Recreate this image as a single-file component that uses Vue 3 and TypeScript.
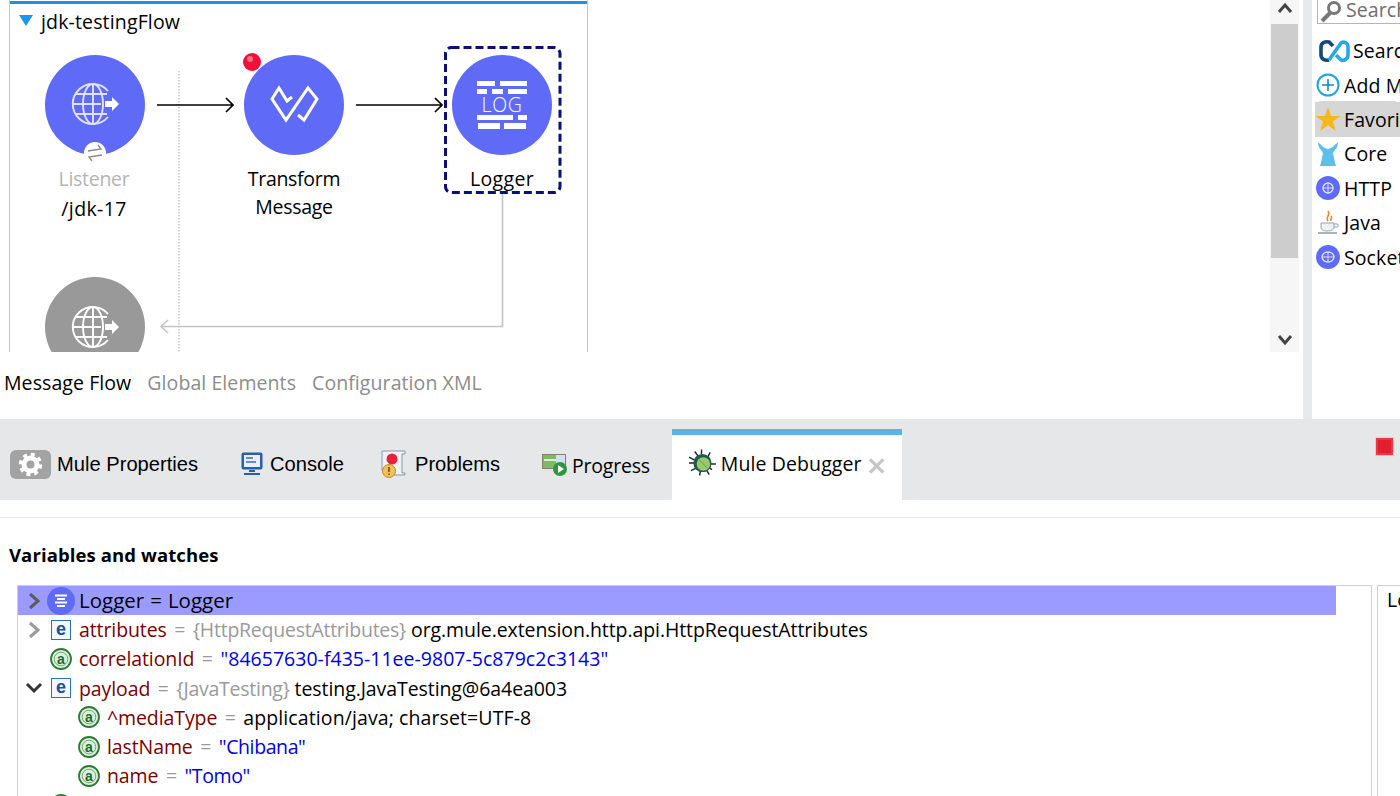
<script setup lang="ts">
interface Row {
  id: number
  depth: number
  chevron: '' | 'closed' | 'open' | 'closedDark'
  icon: 'bar' | 'e' | 'a'
  name: string
  type?: string
  value: string
  kind: 'val' | 'str' | 'wide' | 'strn'
  selected?: boolean
}

const rows: Row[] = [
  { id: 1, depth: 0, chevron: 'closedDark', icon: 'bar', name: 'Logger', value: 'Logger', kind: 'val', selected: true },
  { id: 2, depth: 0, chevron: 'closed', icon: 'e', name: 'attributes', type: '{HttpRequestAttributes} ', value: 'org.mule.extension.http.api.HttpRequestAttributes', kind: 'val' },
  { id: 3, depth: 0, chevron: '', icon: 'a', name: 'correlationId', value: '"84657630-f435-11ee-9807-5c879c2c3143"', kind: 'str' },
  { id: 4, depth: 0, chevron: 'open', icon: 'e', name: 'payload', type: '{JavaTesting} ', value: 'testing.JavaTesting@6a4ea003', kind: 'val' },
  { id: 5, depth: 1, chevron: '', icon: 'a', name: '^mediaType', value: 'application/java; charset=UTF-8', kind: 'wide' },
  { id: 6, depth: 1, chevron: '', icon: 'a', name: 'lastName', value: '"Chibana"', kind: 'strn' },
  { id: 7, depth: 1, chevron: '', icon: 'a', name: 'name', value: '"Tomo"', kind: 'strn' },
  { id: 8, depth: 0, chevron: '', icon: 'a', name: '', value: '', kind: 'val' }
]

const logBars = [
  [477, 81, 18, 5], [500, 81, 27, 5],
  [477, 89, 10, 5], [492, 89, 11, 5], [508, 89, 19, 5],
  [477, 115, 36, 5], [518, 115, 9, 5],
  [478, 123, 22, 6], [504, 123, 22, 6]
]
</script>

<template>
  <div class="page">
    <section class="top">
      <div class="editor">
        <div class="flowbox">
          <svg class="diagram" viewBox="9 0 579 352" width="579" height="352">
            <defs>
              <g id="globe" fill="none" stroke-width="1.9">
                <path d="M15 -13A20 20 0 1 0 15 13" />
                <ellipse cx="0" cy="0" rx="10" ry="20" />
                <path d="M0 -20V20M-18 -10H14M-18 10H14M-20 0H8" />
                <path d="M12 -3H19V-7L26 0L19 7V3H12Z" fill="currentColor" stroke="none" />
              </g>
            </defs>
            <line x1="179" y1="71" x2="179" y2="352" stroke="#a8a8a8" stroke-dasharray="1.5 1.5" />
            <circle cx="95" cy="105" r="50" fill="#5f6bf7" />
            <use href="#globe" x="93" y="104" stroke="#dfe2ff" color="#ffffff" />
            <circle cx="95" cy="153" r="11" fill="#ffffff" />
            <path d="M88 151L101 149L98 145M102 155L89 157L92 161" fill="none" stroke="#8a8a8a" stroke-width="1.3" />

            <circle cx="294" cy="105" r="50" fill="#5f6bf7" />
            <path d="M292 97L287 101L279 88L272 99L286 120L308 88L317 99L304 120L298 115" fill="none" stroke="#ffffff" stroke-width="3" />
            <circle cx="252" cy="62" r="9" fill="#f0103c" />
            <circle cx="250" cy="59" r="3" fill="#ff6f88" />

            <circle cx="502" cy="105" r="50" fill="#5f6bf7" />
            <rect v-for="(b, i) in logBars" :key="i" :x="b[0]" :y="b[1]" :width="b[2]" :height="b[3]" fill="#ffffff" />
            <text x="502" y="112" text-anchor="middle" class="logword">LOG</text>
            <rect x="445.5" y="47.5" width="114.5" height="145" rx="6" fill="none" stroke="#0b0f78" stroke-width="3" stroke-dasharray="8 4" />

            <path d="M157 105H233M226 98L233 105L226 112" fill="none" stroke="#000" stroke-width="1.7" />
            <path d="M356 105H442M435 98L442 105L435 112" fill="none" stroke="#000" stroke-width="1.7" />

            <circle cx="95" cy="327" r="50" fill="#999999" />
            <use href="#globe" x="93" y="327" stroke="#ffffff" color="#ffffff" />
            <path d="M502.5 194V326.5H161M168 320L161 326.5L168 333" fill="none" stroke="#c4c4c4" stroke-width="1.6" />
          </svg>
          <div class="flowtitle"><span class="tri"></span>jdk-testingFlow</div>
          <span class="nodelabel faint n1">Listener</span>
          <span class="nodelabel wide n2">/jdk-17</span>
          <span class="nodelabel n3">Transform<br />Message</span>
          <span class="nodelabel wide n4">Logger</span>
        </div>
        <nav class="viewtabs">
          <span class="on">Message Flow</span>
          <span>Global Elements</span>
          <span>Configuration XML</span>
        </nav>
      </div>

      <div class="scroll">
        <svg class="chev" width="16" height="24" viewBox="0 0 16 24"><path d="M2 12L8 5L14 12" fill="none" stroke="#444" stroke-width="3" /></svg>
        <div class="thumb"></div>
        <div class="scrollrest"></div>
        <svg class="chev" width="16" height="24" viewBox="0 0 16 24"><path d="M2 8L8 15L14 8" fill="none" stroke="#444" stroke-width="3" /></svg>
      </div>
      <div class="sash"></div>

      <aside class="palette">
        <div class="searchbox">
          <svg width="26" height="24" viewBox="0 0 26 24"><circle cx="16" cy="8" r="5.5" fill="none" stroke="#777" stroke-width="3" /><path d="M12 13L4 21" stroke="#777" stroke-width="4" /></svg>
          <span>Search</span>
        </div>
        <div class="palrow first">
          <svg width="31" height="26" viewBox="0 0 31 26"><path d="M14 8L10 4C6 3 2 5 2 9V17C2 21 6 23 10 22" fill="none" stroke="#164a6e" stroke-width="3.6" /><path d="M10 22L22 5C25 3 29 5 29 9V17C29 21 25 23 22 22L17 17" fill="none" stroke="#27a8e0" stroke-width="3.6" /></svg>
          <span>Search in Exchange</span>
        </div>
        <div class="palrow">
          <svg width="24" height="24" viewBox="0 0 24 24"><circle cx="12" cy="12" r="10.5" fill="none" stroke="#1fa3df" stroke-width="2" /><path d="M12 6V18M6 12H18" stroke="#1786c4" stroke-width="1.6" /></svg>
          <span>Add Modules</span>
        </div>
        <div class="palrow fav">
          <svg width="26" height="26" viewBox="0 0 26 26"><path d="M13 1L16.2 10H25.5L18 15.5L20.8 25L13 19.2L5.2 25L8 15.5L.5 10H9.8Z" fill="#f4b81e" /></svg>
          <span>Favorites</span>
        </div>
        <div class="palrow">
          <svg width="24" height="26" viewBox="0 0 24 26"><path d="M2 1C2 8 6 9 7 12C6 17 5 22 4 25H20C19 22 18 17 17 12C18 9 22 8 22 1C19 4 15 8 12 8C9 8 5 4 2 1Z" fill="#5cc0ec" /></svg>
          <span>Core</span>
        </div>
        <div class="palrow">
          <svg width="24" height="24" viewBox="0 0 24 24"><circle cx="12" cy="12" r="12" fill="#5f6bf7" /><circle cx="12" cy="12" r="5" fill="none" stroke="#dfe2ff" stroke-width="1.4" /><path d="M12 7V17M7 12H17" stroke="#dfe2ff" /></svg>
          <span>HTTP</span>
        </div>
        <div class="palrow">
          <svg width="24" height="26" viewBox="0 0 24 26"><path d="M12 1C15 5 9 7 12 11M15 6C17 8 14 9 15 11" fill="none" stroke="#e8872a" stroke-width="1.6" /><path d="M5 13H18V17C18 20 15 21 11 21C8 21 5 20 5 17Z" fill="#eef1f4" stroke="#9aa4ad" /><path d="M18 14H22V17H18" fill="none" stroke="#9aa4ad" /><path d="M2 23H21" stroke="#8b96a0" stroke-width="1.5" /></svg>
          <span>Java</span>
        </div>
        <div class="palrow">
          <svg width="24" height="24" viewBox="0 0 24 24"><circle cx="12" cy="12" r="12" fill="#5f6bf7" /><ellipse cx="12" cy="12" rx="6" ry="5" fill="none" stroke="#dfe2ff" stroke-width="1.4" /><path d="M12 7V17M6 12H18" stroke="#dfe2ff" /></svg>
          <span>Sockets</span>
        </div>
      </aside>
    </section>

    <section class="tabbar">
      <div class="tab t1">
        <svg width="41" height="29" viewBox="0 0 41 29"><rect width="41" height="29" rx="6" fill="#a3a3a3" /><circle cx="20.5" cy="14.5" r="6.5" fill="none" stroke="#fff" stroke-width="5" /><circle cx="20.5" cy="14.5" r="10" fill="none" stroke="#fff" stroke-width="3.5" stroke-dasharray="4 3.85" /></svg>
        <span class="arial">Mule Properties</span>
      </div>
      <div class="tab t2">
        <svg width="22" height="24" viewBox="0 0 22 24"><rect x=".5" y=".5" width="21" height="17" rx="2" fill="#2b5ea8" /><rect x="3" y="3" width="16" height="12" fill="#e9eff7" /><path d="M5 6H12M5 10H15" stroke="#3b6fb5" stroke-width="1.5" /><path d="M8 18H14V20H8ZM3 21H19V23H3Z" fill="#2b5ea8" /></svg>
        <span class="arial">Console</span>
      </div>
      <div class="tab t3">
        <svg width="25" height="28" viewBox="0 0 25 28"><path d="M1 1H24V4H21V23H24V25H12V20H1Z" fill="#eef2f7" stroke="#8a97a8" /><circle cx="11" cy="9" r="5.5" fill="#e8203a" /><circle cx="8" cy="21" r="6.5" fill="#f0c05a" stroke="#c88a1c" /><path d="M8 17V22M8 23.5V25" stroke="#7a4a00" stroke-width="1.6" /></svg>
        <span class="arial">Problems</span>
      </div>
      <div class="tab t4">
        <svg width="25" height="22" viewBox="0 0 25 22"><rect x=".5" y=".5" width="23" height="14" fill="#cfe2ee" stroke="#8b7d6b" /><rect x="1" y="1" width="13" height="13" fill="#7dbb62" /><path d="M2 6H14" stroke="#fff" stroke-width="1.5" /><circle cx="18" cy="15" r="7" fill="#2d9640" /><path d="M16 11L22 15L16 19Z" fill="#fff" /></svg>
        <span>Progress</span>
      </div>
      <div class="tab active">
        <svg width="28" height="28" viewBox="0 0 28 28"><path d="M6 2L11 9M13 0V5M22 3L19 9M0 8L6 11M0 14H6M23 15H28M2 22L8 19M21 26L18 21M11 27L12 22M24 21L20 18" stroke="#1d2a2a" stroke-width="1.5" /><circle cx="14" cy="14" r="9.5" fill="#1c5c52" /><circle cx="15" cy="15" r="7" fill="#9ac86e" /><path d="M11 11L19 19" stroke="#5f9e55" /></svg>
        <span>Mule Debugger</span>
        <svg class="close" width="18" height="18" viewBox="0 0 18 18"><path d="M2 2L16 16M16 2L2 16" stroke="#c6c6c6" stroke-width="3.4" /></svg>
      </div>
      <div class="stop"><div class="stopin"></div></div>
    </section>

    <div class="strip"></div>

    <section class="debugger">
      <h2>Variables and watches</h2>
      <div class="panes">
        <div class="tree">
          <div v-for="r in rows" :key="r.id" class="row" :class="{ sel: r.selected, deep: r.depth > 0 }">
            <span class="chevcell">
              <svg v-if="r.chevron === 'closed' || r.chevron === 'closedDark'" width="14" height="18" viewBox="0 0 14 18"><path d="M3 2L11 9L3 16" fill="none" :stroke="r.chevron === 'closed' ? '#9a9a9a' : '#5c5c5c'" stroke-width="3" /></svg>
              <svg v-else-if="r.chevron === 'open'" width="18" height="14" viewBox="0 0 18 14"><path d="M2 3L9 10L16 3" fill="none" stroke="#333" stroke-width="3" /></svg>
            </span>
            <svg v-if="r.icon === 'bar'" class="ico" width="28" height="28" viewBox="0 0 28 28"><circle cx="14" cy="14" r="14" fill="#5f6bf7" /><path d="M8 8.5H20M10 12H18M8 15.5H20M10 19H18" stroke="#fff" stroke-width="1.8" /></svg>
            <svg v-else-if="r.icon === 'e'" class="ico" width="28" height="22" viewBox="0 0 28 22"><rect x="4.5" y="1.5" width="19" height="19" fill="#f4f8fc" stroke="#2c72b8" /><text x="14" y="16" text-anchor="middle" class="glyph e">e</text></svg>
            <svg v-else class="ico" width="28" height="22" viewBox="0 0 28 22"><circle cx="14" cy="11" r="10" fill="#dcefdc" stroke="#2c7a34" stroke-width="1.8" /><circle cx="14" cy="11" r="6.8" fill="none" stroke="#2c7a34" stroke-width=".6" /><text x="14" y="16" text-anchor="middle" class="glyph a">a</text></svg>
            <span class="text">
              <span class="nm">{{ r.name }}</span>
              <span v-if="r.name" class="eq">=</span>
              <span v-if="r.type" class="ty">{{ r.type }}</span>
              <span :class="r.kind">{{ r.value }}</span>
            </span>
          </div>
        </div>
        <div class="detail">Logger</div>
      </div>
    </section>
  </div>
</template>

<style>
html,
body {
  margin: 0;
  background: #fff;
  overflow: hidden;
}
</style>

<style scoped>
.page {
  width: 1400px;
  height: 796px;
  overflow: hidden;
  background: #fff;
  font-family: "Open Sans", "Liberation Sans", sans-serif;
  font-size: 19.5px;
  letter-spacing: 0.1px;
  color: #000;
  display: flex;
  flex-direction: column;
}
.top {
  height: 419px;
  flex: none;
  display: flex;
}
.editor {
  width: 1270px;
  flex: none;
}
.flowbox {
  position: relative;
  box-sizing: border-box;
  width: 579px;
  height: 352px;
  margin-left: 9px;
  border-left: 1px solid #c6c6c6;
  border-right: 1px solid #c6c6c6;
  overflow: hidden;
}
.flowbox::before {
  content: "";
  position: absolute;
  left: -1px;
  right: -1px;
  top: 1px;
  height: 3px;
  background: #1e90e8;
}
.diagram {
  position: absolute;
  left: -1px;
  top: 0;
}
.logword {
  font-size: 19.5px;
  fill: #fff;
  letter-spacing: 0.6px;
  font-weight: 300;
}
.flowtitle {
  position: absolute;
  left: 9px;
  top: 8px;
  display: flex;
  align-items: center;
  gap: 8px;
  letter-spacing: 0.15px;
}
.tri {
  width: 0;
  height: 0;
  border-left: 7px solid transparent;
  border-right: 7px solid transparent;
  border-top: 11px solid #1a96f0;
  margin-bottom: 3px;
}
.nodelabel {
  position: absolute;
  width: 120px;
  text-align: center;
  line-height: 27.5px;
  letter-spacing: -0.3px;
}
.nodelabel.wide {
  letter-spacing: 0.35px;
}
.n1 {
  left: 24px;
  top: 165px;
}
.n2 {
  left: 24px;
  top: 195px;
}
.n3 {
  left: 224px;
  top: 165px;
}
.n4 {
  left: 432px;
  top: 165px;
}
.faint {
  color: #b4b4b4;
}
.viewtabs {
  display: flex;
  gap: 16px;
  padding: 17px 0 0 4px;
  line-height: 28px;
  letter-spacing: 0.08px;
  color: #8c8c8c;
}
.viewtabs .on {
  color: #000;
}
.scroll {
  width: 29px;
  height: 352px;
  flex: none;
  background: #f6f6f6;
  display: flex;
  flex-direction: column;
  align-items: center;
}
.chev {
  flex: none;
}
.thumb {
  width: 27px;
  height: 234px;
  background: #cdcdcd;
  flex: none;
}
.scrollrest {
  flex: 1;
}
.sash {
  width: 9px;
  margin-left: 4px;
  flex: none;
  background: #e8e9eb;
}
.palette {
  flex: 1;
  min-width: 0;
  overflow: hidden;
  padding-left: 3px;
  white-space: nowrap;
}
.searchbox {
  display: flex;
  align-items: center;
  gap: 2px;
  height: 23px;
  margin-left: 2px;
  border: 1px solid #b5b5b5;
  border-top: 0;
  border-right: 0;
  color: #6e6e6e;
  line-height: 20px;
}
.searchbox svg {
  flex: none;
}
.searchbox span {
  align-self: flex-start;
}
.palrow {
  height: 34.4px;
  display: grid;
  grid-template-columns: 29px 1fr;
  align-items: center;
}
.palrow svg {
  margin-left: 1px;
}
.palrow.first {
  margin-top: 9.5px;
  grid-template-columns: 38px 1fr;
}
.palrow.first svg {
  margin-left: 4px;
}
.palrow.fav {
  background: #d6d6d6;
  box-shadow: 0 -5px 0 -4px #d8d8d8;
}
.palrow.fav svg {
  margin-left: 0;
}
.tabbar {
  flex: none;
  height: 81px;
  background: #e6e7e9;
  display: flex;
  align-items: flex-start;
}
.tab {
  display: flex;
  align-items: center;
  height: 30px;
  margin-top: 30px;
  flex: none;
  white-space: nowrap;
}
.arial {
  font-family: "Liberation Sans", Arial, sans-serif;
  font-size: 20.15px;
  letter-spacing: 0;
}
.t1 {
  margin-left: 10px;
  gap: 6px;
}
.t2 {
  margin-left: 43px;
  gap: 7px;
}
.t3 {
  margin-left: 37px;
  gap: 9px;
}
.t4 {
  margin-left: 42px;
  gap: 5px;
  height: 28px;
  padding-top: 2px;
  letter-spacing: -0.2px;
}
.active {
  box-sizing: border-box;
  margin-left: 22px;
  margin-top: 10px;
  width: 230px;
  height: 71px;
  padding: 0 17px 9px;
  background: #fff;
  border-top: 6px solid #5db2e2;
  gap: 5px;
  letter-spacing: 0.1px;
}
.active .close {
  margin-left: 1px;
  margin-top: 6px;
}
.stop {
  box-sizing: border-box;
  width: 19px;
  height: 19px;
  margin: 18px 6px 0 auto;
  padding: 2px;
  background: #e9393f;
  border: 1px solid #f7c4c6;
  flex: none;
}
.stopin {
  height: 100%;
  background: #e02030;
}
.strip {
  height: 17px;
  flex: none;
  border-bottom: 1px solid #e8e8e8;
}
.debugger {
  flex: 1;
  min-height: 0;
  display: flex;
  flex-direction: column;
}
h2 {
  margin: 24px 0 17px 9px;
  font-size: 18.5px;
  line-height: 26px;
  font-weight: 700;
  letter-spacing: 0.1px;
}
.panes {
  display: flex;
  gap: 5px;
  padding-left: 17px;
  flex: 1;
  min-height: 0;
}
.tree {
  box-sizing: border-box;
  width: 1355px;
  flex: none;
  border: 1px solid #cfcfcf;
  border-bottom: 0;
  overflow: hidden;
  padding-right: 35px;
}
.row {
  height: 29.2px;
  display: flex;
  align-items: center;
  white-space: pre;
  letter-spacing: -0.08px;
}
.row.sel {
  background: #9b9bff;
  font-size: 20.5px;
  letter-spacing: 0;
}
.row.sel .text {
  padding-bottom: 1px;
}
.row.deep {
  padding-left: 28px;
}
.chevcell {
  width: 29px;
  flex: none;
  display: flex;
  justify-content: center;
  padding-left: 2px;
  box-sizing: border-box;
}
.ico {
  flex: none;
}
.glyph {
  font-family: "Liberation Sans", sans-serif;
  font-weight: 700;
  letter-spacing: 0;
}
.glyph.e {
  fill: #1c4f9c;
  font-size: 18px;
}
.glyph.a {
  fill: #1f6a2a;
  font-size: 14px;
}
.text {
  padding-left: 4px;
}
.nm {
  color: #7a0000;
  letter-spacing: -0.1px;
}
.sel .nm {
  color: #000;
  letter-spacing: 0;
}
.eq {
  color: #9a9a9a;
  padding: 0 7.5px;
}
.ty {
  color: #9a9a9a;
  letter-spacing: -0.25px;
}
.sel .eq {
  color: #000;
  padding: 0 6px;
}
.val {
  color: #000;
}
.wide {
  color: #000;
  letter-spacing: 0.1px;
}
.str {
  color: #0000e0;
  letter-spacing: 0.02px;
}
.strn {
  color: #0000e0;
  letter-spacing: -0.4px;
}
.detail {
  flex: 1;
  min-width: 0;
  box-sizing: border-box;
  border: 1px solid #cfcfcf;
  border-bottom: 0;
  border-right: 0;
  padding: 0 0 0 9px;
  overflow: hidden;
  white-space: nowrap;
}
</style>
